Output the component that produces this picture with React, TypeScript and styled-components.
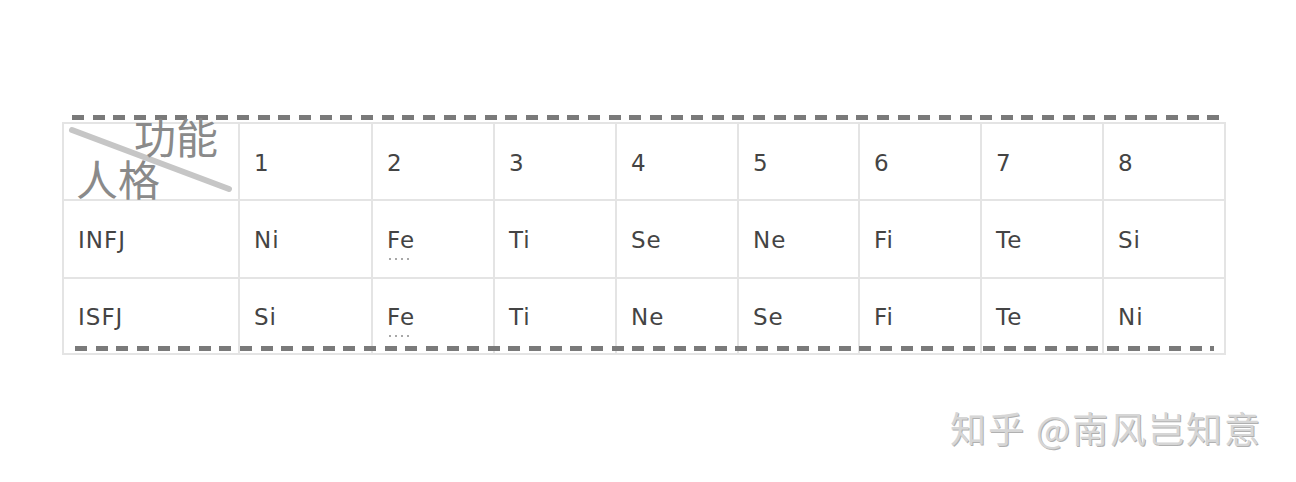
import styled, { createGlobalStyle } from 'styled-components';

const GlobalStyle = createGlobalStyle`
    html, body {
        margin: 0;
        padding: 0;
        background: #ffffff;
    }
    body {
        font-family: 'DejaVu Sans', 'Noto Sans CJK SC', sans-serif;
    }
`;

const headers = ['1', '2', '3', '4', '5', '6', '7', '8'];

const rows = [
    { type: 'INFJ', functions: ['Ni', 'Fe', 'Ti', 'Se', 'Ne', 'Fi', 'Te', 'Si'] },
    { type: 'ISFJ', functions: ['Si', 'Fe', 'Ti', 'Ne', 'Se', 'Fi', 'Te', 'Ni'] },
];

// words the spell checker flagged in the original capture
const flagged = ['Fe'];

const App = () => {
    return (
        <Page>
            <GlobalStyle />
            <Board>
                <DashRule />
                <Grid>
                    <CornerCell>
                        <Diagonal viewBox="0 0 174 75" aria-hidden="true">
                            <line x1="8" y1="6" x2="165" y2="65" />
                        </Diagonal>
                        <CornerLabel $side="top">功能</CornerLabel>
                        <CornerLabel $side="bottom">人格</CornerLabel>
                    </CornerCell>
                    {headers.map((h) => (
                        <Cell key={h}>{h}</Cell>
                    ))}
                    {rows.map((row) => (
                        <Row key={row.type} row={row} />
                    ))}
                </Grid>
                <BottomDash />
            </Board>
            <Footer>
                <Watermark>知乎 @南风岂知意</Watermark>
            </Footer>
        </Page>
    );
};

const Row = ({ row }: { row: { type: string; functions: string[] } }) => (
    <>
        <Cell>{row.type}</Cell>
        {row.functions.map((fn, i) => (
            <Cell key={i}>
                {flagged.includes(fn) ? <Flagged>{fn}</Flagged> : fn}
            </Cell>
        ))}
    </>
);

export default App;

const Page = styled.div`
    width: 1296px;
    height: 482px;
    overflow: hidden;
    display: flex;
    flex-direction: column;
    padding-top: 115px;
    box-sizing: border-box;
`;

const Board = styled.div`
    position: relative;
    width: 1164px;
    margin-left: 62px;
`;

const dashes = `repeating-linear-gradient(
    to right,
    #7a7a7a 0,
    #7a7a7a 12px,
    transparent 12px,
    transparent 20.64px
)`;

const DashRule = styled.div`
    height: 5px;
    margin: 0 6px 2px 10px;
    background: ${dashes};
`;

const BottomDash = styled.div`
    position: absolute;
    left: 13px;
    right: 12px;
    bottom: 4px;
    height: 5px;
    background: ${dashes};
`;

const Grid = styled.div`
    display: grid;
    grid-template-columns: 174px 131px 120px 120px 120px 119px 120px 120px 120px;
    grid-template-rows: 75px 76px 74px;
    gap: 2px;
    padding: 2px;
    background: #e4e4e4;
`;

const Cell = styled.div`
    display: flex;
    align-items: center;
    padding: 2px 0 0 14px;
    background: #ffffff;
    color: #444444;
    font-family: 'DejaVu Sans', sans-serif;
    font-size: 23px;
    letter-spacing: 1px;
`;

const Flagged = styled.span`
    position: relative;
    &::after {
        content: '';
        position: absolute;
        left: 2px;
        width: 20px;
        bottom: -7px;
        height: 2px;
        background: repeating-linear-gradient(
            to right,
            #a8a8a8 0,
            #a8a8a8 2px,
            transparent 2px,
            transparent 6px
        );
    }
`;

const CornerCell = styled.div`
    position: relative;
    z-index: 1;
    display: flex;
    flex-direction: column;
    background: #ffffff;
`;

const Diagonal = styled.svg`
    position: absolute;
    inset: 0;
    width: 100%;
    height: 100%;
    overflow: visible;

    line {
        stroke: #c6c6c6;
        stroke-width: 6;
        stroke-linecap: round;
    }
`;

const CornerLabel = styled.div<{ $side: 'top' | 'bottom' }>`
    position: relative;
    font-family: 'Noto Sans CJK SC', sans-serif;
    font-size: 42px;
    line-height: 42px;
    color: #8a8a8a;
    align-self: ${({ $side }) => ($side === 'top' ? 'flex-end' : 'flex-start')};
    margin: ${({ $side }) => ($side === 'top' ? '-9px 20px 0 0' : '0 0 0 12px')};
`;

const Footer = styled.div`
    display: flex;
    justify-content: flex-end;
    padding: 52px 34px 0 0;
`;

const Watermark = styled.div`
    font-family: 'Noto Sans CJK SC', sans-serif;
    font-size: 36px;
    line-height: 40px;
    letter-spacing: 2px;
    color: #d6d6d6;
    text-shadow: 1px 1px 0 #b0b0b0;
`;
